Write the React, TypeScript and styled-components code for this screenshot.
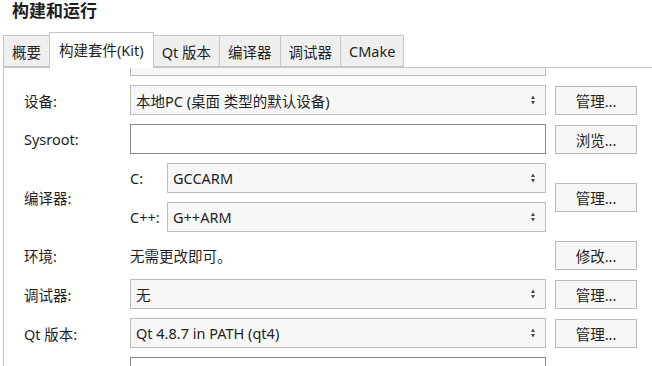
import styled, { createGlobalStyle } from 'styled-components'

const GlobalStyle = createGlobalStyle`
  html, body {
    margin: 0;
    padding: 0;
    background: #ffffff;
    overflow: hidden;
  }
  body {
    font-family: "Noto Sans", "Noto Sans CJK SC", sans-serif;
    font-size: 14.5px;
    color: #1f1f1f;
  }
`

const Root = styled.div`
  width: 652px;
  height: 366px;
  overflow: hidden;
  display: flex;
  flex-direction: column;
`

const Title = styled.div`
  height: 32px;
  padding-left: 12px;
  font-size: 17px;
  font-weight: bold;
  line-height: 21px;
`

const TabBar = styled.div`
  height: 35px;
  display: flex;
  align-items: flex-end;
  padding-left: 3px;
  position: relative;
  z-index: 1;
`

const Tab = styled.div<{ $active?: boolean }>`
  height: ${p => (p.$active ? '36px' : '32px')};
  margin-bottom: ${p => (p.$active ? '-1px' : '0')};
  margin-left: -1px;
  padding: 0 ${p => (p.$active ? '9px' : '8px')};
  box-sizing: border-box;
  display: flex;
  align-items: center;
  border: 1px solid #c6c6c6;
  border-bottom: ${p => (p.$active ? '0' : '1px solid #c6c6c6')};
  background: ${p => (p.$active ? '#ffffff' : '#efefef')};
  white-space: nowrap;
  padding-bottom: ${p => (p.$active ? '2px' : '0')};

  &:first-child {
    margin-left: 0;
  }
`

const Panel = styled.div`
  flex: 1;
  margin-left: 3px;
  border-left: 1px solid #c6c6c6;
  border-top: 1px solid #c6c6c6;
  overflow: hidden;
`

const Form = styled.div`
  margin-top: -22px;
  padding-left: 20px;
  display: flex;
  flex-direction: column;
  gap: 9px;
`

const Row = styled.div<{ $h?: number }>`
  display: grid;
  grid-template-columns: 97px 416px 82px;
  column-gap: 9px;
  align-items: center;
  min-height: ${p => p.$h ?? 30}px;
`

const Label = styled.div`
  white-space: nowrap;
`

const Combo = styled.div`
  height: 30px;
  box-sizing: border-box;
  border: 1px solid #bcbcbc;
  background: #f7f7f7;
  display: flex;
  align-items: center;
  padding: 0 9px 0 5px;
  white-space: nowrap;

  span {
    flex: 1;
  }
`

const LineEdit = styled.div`
  height: 30px;
  box-sizing: border-box;
  border: 1px solid #8a8a8a;
  background: #ffffff;
`

const Button = styled.div`
  height: 29px;
  box-sizing: border-box;
  border: 1px solid #bababa;
  background: #f6f6f6;
  display: flex;
  align-items: center;
  justify-content: center;
  white-space: nowrap;
`

const SubGrid = styled.div`
  display: grid;
  grid-template-columns: 37px 1fr;
  row-gap: 9px;
  align-items: center;
`

const Arrows = () => (
  <svg width="6" height="12" viewBox="0 0 6 12">
    <polygon points="3,1.5 5,5 1,5" fill="#4a4a4a" />
    <polygon points="1,7 5,7 3,10.5" fill="#4a4a4a" />
  </svg>
)

const Select = ({ value }: { value: string }) => (
  <Combo>
    <span>{value}</span>
    <Arrows />
  </Combo>
)

const tabs = ['概要', '构建套件(Kit)', 'Qt 版本', '编译器', '调试器', 'CMake']

export default function App() {
  return (
    <Root>
      <GlobalStyle />
      <Title>构建和运行</Title>
      <TabBar>
        {tabs.map((t, i) => (
          <Tab key={t} $active={i === 1}>{t}</Tab>
        ))}
      </TabBar>
      <Panel>
        <Form>
          {/* row scrolled mostly out of view */}
          <Row>
            <Label />
            <Select value="" />
          </Row>
          <Row>
            <Label>设备:</Label>
            <Select value="本地PC (桌面 类型的默认设备)" />
            <Button>管理...</Button>
          </Row>
          <Row>
            <Label>Sysroot:</Label>
            <LineEdit />
            <Button>浏览...</Button>
          </Row>
          <Row>
            <Label>编译器:</Label>
            <SubGrid>
              <Label>C:</Label>
              <Select value="GCCARM" />
              <Label>C++:</Label>
              <Select value="G++ARM" />
            </SubGrid>
            <Button>管理...</Button>
          </Row>
          <Row $h={28}>
            <Label>环境:</Label>
            <Label>无需更改即可。</Label>
            <Button>修改...</Button>
          </Row>
          <Row>
            <Label>调试器:</Label>
            <Select value="无" />
            <Button>管理...</Button>
          </Row>
          <Row>
            <Label>Qt 版本:</Label>
            <Select value="Qt 4.8.7 in PATH (qt4)" />
            <Button>管理...</Button>
          </Row>
          <Row>
            <Label />
            <LineEdit />
          </Row>
        </Form>
      </Panel>
    </Root>
  )
}
